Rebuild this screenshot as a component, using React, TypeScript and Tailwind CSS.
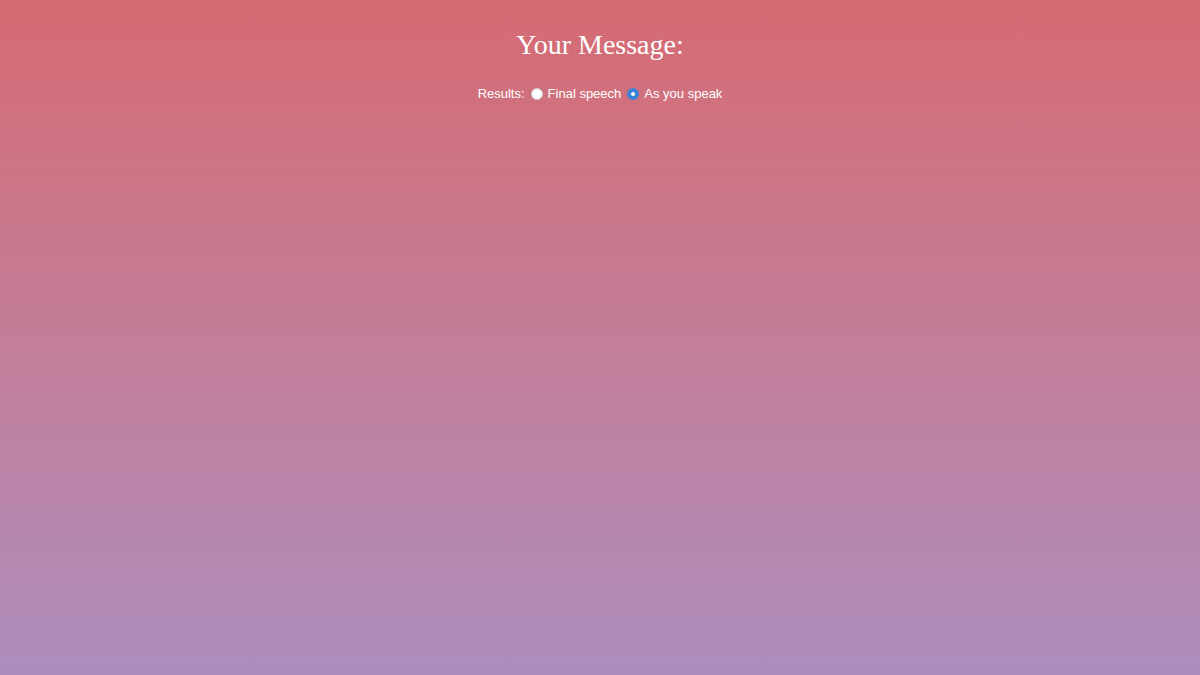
export default function App() {
  return (
    <div className="min-h-[675px] w-full bg-gradient-to-b from-[#d66a72] to-[#ad8dbd] flex flex-col items-center">
      <h1 className="mt-[28px] text-[28px] leading-[34px] text-white font-['Liberation_Serif',serif]">
        Your Message:
      </h1>
      <div className="mt-[24px] flex items-center text-[13px] leading-[16px] text-white font-['Liberation_Sans',sans-serif]">
        <span>Results:</span>
        <span className="ml-[6px] mr-[5px] w-[12px] h-[12px] rounded-full bg-white border border-[#c8c8c8]" />
        <span>Final speech</span>
        <span className="ml-[6px] mr-[5px] w-[12px] h-[12px] rounded-full bg-[#3b82d8] flex items-center justify-center">
          <span className="w-[4px] h-[4px] rounded-full bg-white" />
        </span>
        <span>As you speak</span>
      </div>
    </div>
  );
}
